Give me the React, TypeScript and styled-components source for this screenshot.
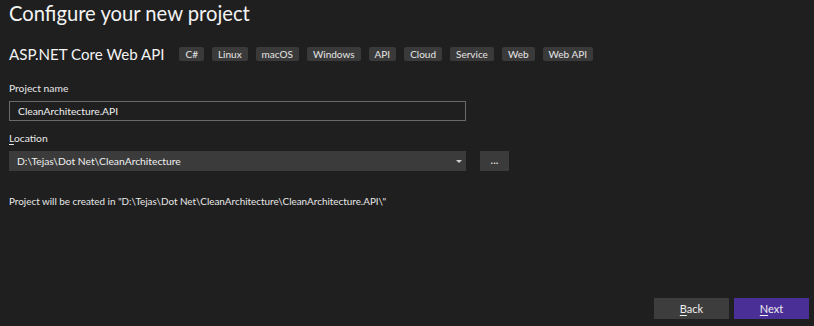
import React from 'react'
import styled, { createGlobalStyle } from 'styled-components'

const GlobalStyle = createGlobalStyle`
  html, body {
    margin: 0;
    padding: 0;
    background: #1f1f1f;
  }
  body {
    font-family: Lato, 'Noto Sans', sans-serif;
    color: #f1f1f1;
  }
`

const Page = styled.div`
  width: 814px;
  height: 326px;
  box-sizing: border-box;
  padding: 0 9px 0 9px;
  display: flex;
  flex-direction: column;
  overflow: hidden;
`

const Title = styled.h1`
  margin: 0;
  font-size: 20.2px;
  font-weight: 400;
  line-height: 26px;
  height: 26px;
  color: #f3f3f3;
`

const TemplateRow = styled.div`
  display: flex;
  align-items: center;
  margin-top: 17px;
  height: 22px;
`

const TemplateName = styled.h2`
  margin: 0;
  font-size: 15.1px;
  font-weight: 400;
  color: #f3f3f3;
  margin-right: 15px;
`

const Tags = styled.div`
  display: flex;
  gap: 8px;
`

const Tag = styled.span`
  background: #3a3a3a;
  color: #e6e6e6;
  font-size: 10px;
  height: 14px;
  line-height: 14px;
  padding: 0 6px;
  border-radius: 2px;
`

const Label = styled.div`
  font-size: 10.3px;
  color: #e8e8e8;
  margin-top: ${props => props.$top}px;
  line-height: 14px;

  u {
    text-decoration-thickness: 1px;
    text-underline-offset: 2px;
  }
`

const TextInput = styled.div`
  margin-top: 6px;
  width: 457px;
  height: 20px;
  box-sizing: border-box;
  border: 1px solid #6a6a6a;
  background: #1f1f1f;
  font-size: 10.3px;
  line-height: 18px;
  padding-left: 8px;
  color: #f0f0f0;
`

const LocationRow = styled.div`
  display: flex;
  gap: 14px;
  margin-top: 6px;
`

const Select = styled.div`
  width: 457px;
  height: 20px;
  box-sizing: border-box;
  background: #3b3b3b;
  font-size: 10.3px;
  line-height: 20px;
  padding: 0 4px 0 8px;
  color: #f0f0f0;
  display: flex;
  justify-content: space-between;
  align-items: center;
`

const Caret = styled.span`
  width: 0;
  height: 0;
  border-left: 3px solid transparent;
  border-right: 3px solid transparent;
  border-top: 3px solid #d0d0d0;
`

const Browse = styled.div`
  width: 29px;
  height: 20px;
  background: #3b3b3b;
  color: #f0f0f0;
  font-size: 11px;
  text-align: center;
  line-height: 18px;
`

const Note = styled.div`
  margin-top: 23px;
  font-size: 9.9px;
  color: #e8e8e8;
  line-height: 14px;
`

const Footer = styled.div`
  margin-top: auto;
  margin-bottom: 7px;
  display: flex;
  justify-content: flex-end;
  gap: 5px;
  margin-right: -4px;
`

const Button = styled.button`
  width: 75px;
  height: 21px;
  border: none;
  padding: 0;
  font-family: inherit;
  font-size: 11px;
  color: #f0f0f0;
  background: ${props => (props.$primary ? '#4a2f97' : '#3d3d3d')};

  u {
    text-underline-offset: 2px;
  }
`

const tags = ['C#', 'Linux', 'macOS', 'Windows', 'API', 'Cloud', 'Service', 'Web', 'Web API']

export default function App() {
  return (
    <Page>
      <GlobalStyle />
      <Title>Configure your new project</Title>
      <TemplateRow>
        <TemplateName>ASP.NET Core Web API</TemplateName>
        <Tags>
          {tags.map(t => (
            <Tag key={t}>{t}</Tag>
          ))}
        </Tags>
      </TemplateRow>
      <Label $top={16}>Project name</Label>
      <TextInput>CleanArchitecture.API</TextInput>
      <Label $top={10}>
        <u>L</u>ocation
      </Label>
      <LocationRow>
        <Select>
          D:\Tejas\Dot Net\CleanArchitecture
          <Caret />
        </Select>
        <Browse>...</Browse>
      </LocationRow>
      <Note>Project will be created in "D:\Tejas\Dot Net\CleanArchitecture\CleanArchitecture.API\"</Note>
      <Footer>
        <Button>
          <u>B</u>ack
        </Button>
        <Button $primary>
          <u>N</u>ext
        </Button>
      </Footer>
    </Page>
  )
}
